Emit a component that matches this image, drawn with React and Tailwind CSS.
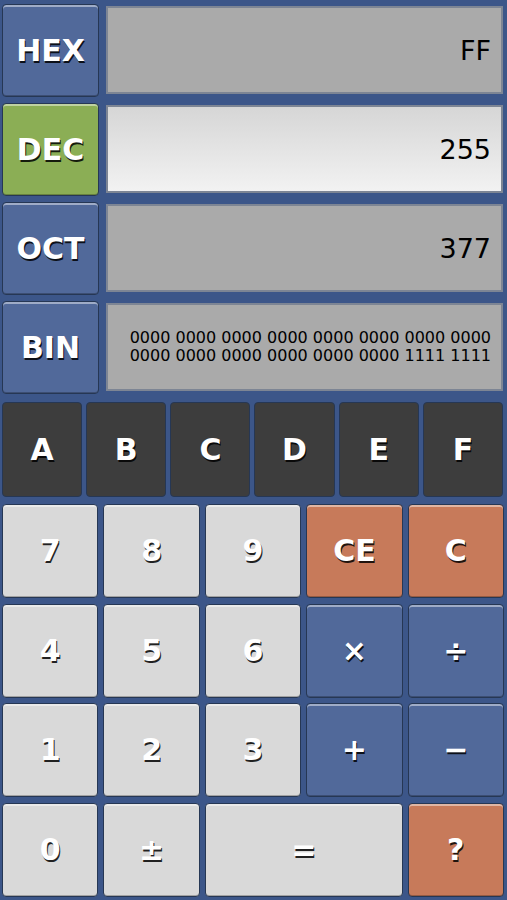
const FONT = "font-['DejaVu_Sans','Liberation_Sans',sans-serif]";
const LABEL =
  "font-bold text-white text-[30px] leading-none [text-shadow:1px_2px_0_rgba(0,0,0,0.85)]";

const modes = [
  { name: "HEX", value: "FF" },
  { name: "DEC", value: "255", active: true },
  { name: "OCT", value: "377" },
  { name: "BIN", value: ["0000 0000 0000 0000 0000 0000 0000 0000", "0000 0000 0000 0000 0000 0000 1111 1111"] },
];

const tones = {
  blue: "bg-[#51699a]",
  green: "bg-[#8bae55]",
  orange: "bg-[#c77a5a]",
  light: "bg-[#d9d9d9]",
  dark: "bg-[#3d3d3d] shadow-none",
};

function Key({ label, tone = "light", className = "" }) {
  return (
    <button
      className={`flex items-center justify-center rounded-[4px] border border-[#263754] shadow-[inset_0_2px_0_rgba(255,255,255,0.45),inset_0_-1px_0_rgba(0,0,0,0.25)] ${tones[tone]} ${LABEL} ${className}`}
    >
      {label}
    </button>
  );
}

function ModeRow({ mode }) {
  const isBin = Array.isArray(mode.value);
  return (
    <div className="flex h-[93px] gap-[7px]">
      <Key label={mode.name} tone={mode.active ? "green" : "blue"} className="w-[97px] shrink-0" />
      <div
        className={`mt-[2px] mb-[3px] flex flex-1 flex-col items-end justify-center border-2 border-[#7d8594] pr-[10px] text-black ${
          mode.active ? "bg-gradient-to-b from-[#d6d6d6] to-[#f2f2f2]" : "bg-[#aaaaaa]"
        }`}
      >
        {isBin ? (
          mode.value.map((line) => (
            <div key={line} className="text-[16px] leading-[18px] whitespace-pre">
              {line}
            </div>
          ))
        ) : (
          <div className="text-[27px] leading-none">{mode.value}</div>
        )}
      </div>
    </div>
  );
}

export default function App() {
  const rows = [
    [["7"], ["8"], ["9"], ["CE", "orange"], ["C", "orange"]],
    [["4"], ["5"], ["6"], ["×", "blue"], ["÷", "blue"]],
    [["1"], ["2"], ["3"], ["+", "blue"], ["−", "blue"]],
  ];

  return (
    <div className={`h-[900px] w-[507px] overflow-hidden bg-[#3c5689] ${FONT}`}>
      {/* number base displays */}
      <div className="flex flex-col gap-[6px] px-[2px] pt-[4px] pr-[4px]">
        {modes.map((m) => (
          <ModeRow key={m.name} mode={m} />
        ))}
      </div>

      {/* hex digits */}
      <div className="mt-[8px] grid h-[95px] grid-cols-6 gap-[4px] px-[2px] pr-[4px]">
        {["A", "B", "C", "D", "E", "F"].map((k) => (
          <Key key={k} label={k} tone="dark" />
        ))}
      </div>

      {/* keypad */}
      <div className="mt-[7px] grid grid-cols-5 grid-rows-[repeat(4,94px)] gap-x-[5px] gap-y-[5.5px] px-[2px] pr-[3px]">
        {rows.flat().map(([label, tone]) => (
          <Key key={label} label={label} tone={tone || "light"} />
        ))}
        <Key label="0" />
        <Key label="±" />
        <Key label="=" className="col-span-2" />
        <Key label="?" tone="orange" />
      </div>
    </div>
  );
}
